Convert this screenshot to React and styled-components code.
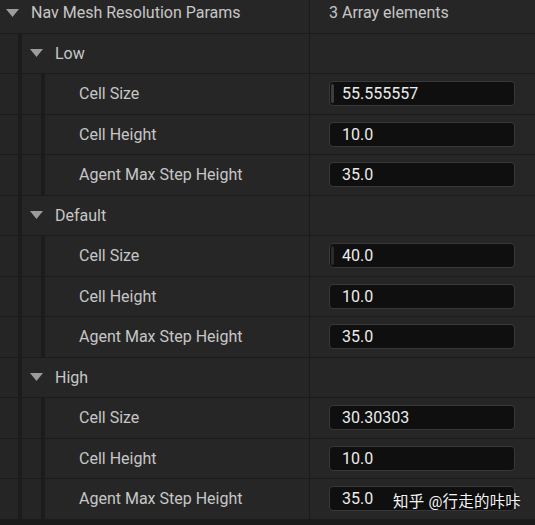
import React from "react";
import styled, { createGlobalStyle } from "styled-components";

const GlobalStyle = createGlobalStyle`
  html, body {
    margin: 0;
    padding: 0;
    background: #1a1a1a;
  }
  body {
    font-family: Roboto, "Noto Sans", "Liberation Sans", sans-serif;
  }
`;

const Panel = styled.div`
  position: relative;
  width: 535px;
  height: 525px;
  overflow: hidden;
  background: #1a1a1a;
`;

const List = styled.div`
  display: flex;
  flex-direction: column;
  margin-top: -7px;
`;

const Row = styled.div`
  display: grid;
  grid-template-columns: 309px 1px 1fr;
  height: 39.5px;
  border-bottom: 1px solid #1b1b1b;
  background: #262626;
`;

const NameSide = styled.div`
  display: flex;
  align-items: stretch;
  min-width: 0;
`;

const Gutter = styled.div`
  box-sizing: border-box;
  width: ${({ $w }) => $w}px;
  flex-shrink: 0;
  background: #252525;
  border-right: 4px solid #1c1c1c;
`;

const NameCell = styled.div`
  flex: 1;
  display: flex;
  align-items: center;
  padding-left: ${({ $pad }) => $pad}px;
  gap: 12px;
  color: #c6c6c6;
  font-size: 16px;
  white-space: nowrap;
`;

const Divider = styled.div`
  background: #1b1b1b;
`;

const ValueCell = styled.div`
  display: flex;
  align-items: center;
  padding-left: 19px;
  color: #c6c6c6;
  font-size: 16px;
`;

const Field = styled.div`
  position: relative;
  width: 186px;
  height: 25px;
  box-sizing: border-box;
  border: 1px solid #383838;
  border-radius: 4px;
  background: #0f0f0f;
  display: flex;
  align-items: center;
  padding-left: 12px;
  color: #ececec;
  font-size: 16px;
  overflow: hidden;
`;

const Spin = styled.span`
  position: absolute;
  left: 1px;
  top: 2px;
  bottom: 2px;
  width: 3px;
  border-radius: 2px;
  background: ${({ $strong }) => ($strong ? "#3d3d3d" : "#2a2a2a")};
`;

const Watermark = styled.div`
  position: absolute;
  left: 393px;
  top: 489px;
  color: #f4f4f4;
  font-family: Roboto, "Noto Sans CJK SC", sans-serif;
  font-size: 15.5px;
  letter-spacing: 0.2px;
  text-shadow: 0 0 2px rgba(0, 0, 0, 0.6);
  white-space: nowrap;
`;

const Arrow = () => (
  <svg width="13" height="8" viewBox="0 0 13 8">
    <path d="M0 0 L13 0 L6.5 8 Z" fill="#9c9c9c" />
  </svg>
);

const groups = [
  {
    name: "Low",
    items: [
      ["Cell Size", "55.555557", "strong"],
      ["Cell Height", "10.0"],
      ["Agent Max Step Height", "35.0"],
    ],
  },
  {
    name: "Default",
    items: [
      ["Cell Size", "40.0", "soft"],
      ["Cell Height", "10.0"],
      ["Agent Max Step Height", "35.0"],
    ],
  },
  {
    name: "High",
    items: [
      ["Cell Size", "30.30303"],
      ["Cell Height", "10.0"],
      ["Agent Max Step Height", "35.0"],
    ],
  },
];

const App = () => {
  return (
    <Panel>
      <GlobalStyle />
      <List>
        <Row>
          <NameSide>
            <NameCell $pad={6}>
              <Arrow />
              Nav Mesh Resolution Params
            </NameCell>
          </NameSide>
          <Divider />
          <ValueCell>3 Array elements</ValueCell>
        </Row>
        {groups.map((g) => (
          <React.Fragment key={g.name}>
            <Row>
              <NameSide>
                <Gutter $w={22} />
                <NameCell $pad={8}>
                  <Arrow />
                  {g.name}
                </NameCell>
              </NameSide>
              <Divider />
              <ValueCell />
            </Row>
            {g.items.map(([label, value, spin]) => (
              <Row key={label}>
                <NameSide>
                  <Gutter $w={22} />
                  <Gutter $w={23} />
                  <NameCell $pad={34}>{label}</NameCell>
                </NameSide>
                <Divider />
                <ValueCell>
                  <Field>
                    {spin && <Spin $strong={spin === "strong"} />}
                    {value}
                  </Field>
                </ValueCell>
              </Row>
            ))}
          </React.Fragment>
        ))}
      </List>
      <Watermark>知乎 @行走的咔咔</Watermark>
    </Panel>
  );
};

export default App;
